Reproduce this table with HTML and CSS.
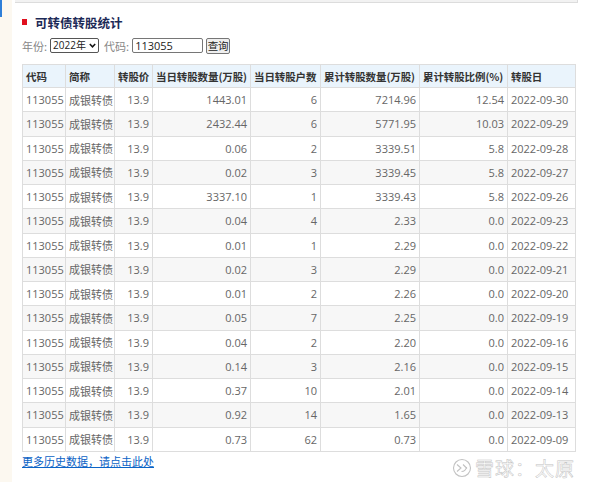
FILE: index.html
```html
<!DOCTYPE html>
<html lang="zh">
<head>
<meta charset="utf-8">
<title>可转债转股统计</title>
<link rel="stylesheet" href="styles.css">
</head>
<body>
<div class="page">
  <div class="side"><div class="side-bar"></div></div>
  <div class="main">
    <div class="top-rule"></div>
    <div class="content">
      <h2 class="title"><span class="title-mark"></span>可转债转股统计</h2>
      <form class="filter">
        <label class="lbl">年份:</label>
        <span class="sel-wrap">
          <select class="sel"><option>2022年</option></select>
          <svg class="sel-arrow" width="7" height="5" viewBox="0 0 7 5" fill="none" stroke="#111" stroke-width="1.5"><path d="M0.8 1 L3.5 3.8 L6.2 1"/></svg>
        </span>
        <label class="lbl">代码:</label>
        <input class="inp" type="text" value="113055">
        <button class="btn" type="button">查询</button>
      </form>
      <table class="grid">
        <colgroup>
          <col style="width:43px"><col style="width:49px"><col style="width:38px"><col style="width:98px">
          <col style="width:70px"><col style="width:99px"><col style="width:88px"><col style="width:68px">
        </colgroup>
        <thead>
          <tr><th>代码</th><th>简称</th><th>转股价</th><th>当日转股数量(万股)</th><th>当日转股户数</th><th>累计转股数量(万股)</th><th>累计转股比例(%)</th><th>转股日</th></tr>
        </thead>
        <tbody>
          <tr><td>113055</td><td>成银转债</td><td class="r">13.9</td><td class="r">1443.01</td><td class="r">6</td><td class="r">7214.96</td><td class="r">12.54</td><td>2022-09-30</td></tr>
          <tr><td>113055</td><td>成银转债</td><td class="r">13.9</td><td class="r">2432.44</td><td class="r">6</td><td class="r">5771.95</td><td class="r">10.03</td><td>2022-09-29</td></tr>
          <tr><td>113055</td><td>成银转债</td><td class="r">13.9</td><td class="r">0.06</td><td class="r">2</td><td class="r">3339.51</td><td class="r">5.8</td><td>2022-09-28</td></tr>
          <tr><td>113055</td><td>成银转债</td><td class="r">13.9</td><td class="r">0.02</td><td class="r">3</td><td class="r">3339.45</td><td class="r">5.8</td><td>2022-09-27</td></tr>
          <tr><td>113055</td><td>成银转债</td><td class="r">13.9</td><td class="r">3337.10</td><td class="r">1</td><td class="r">3339.43</td><td class="r">5.8</td><td>2022-09-26</td></tr>
          <tr><td>113055</td><td>成银转债</td><td class="r">13.9</td><td class="r">0.04</td><td class="r">4</td><td class="r">2.33</td><td class="r">0.0</td><td>2022-09-23</td></tr>
          <tr><td>113055</td><td>成银转债</td><td class="r">13.9</td><td class="r">0.01</td><td class="r">1</td><td class="r">2.29</td><td class="r">0.0</td><td>2022-09-22</td></tr>
          <tr><td>113055</td><td>成银转债</td><td class="r">13.9</td><td class="r">0.02</td><td class="r">3</td><td class="r">2.29</td><td class="r">0.0</td><td>2022-09-21</td></tr>
          <tr><td>113055</td><td>成银转债</td><td class="r">13.9</td><td class="r">0.01</td><td class="r">2</td><td class="r">2.26</td><td class="r">0.0</td><td>2022-09-20</td></tr>
          <tr><td>113055</td><td>成银转债</td><td class="r">13.9</td><td class="r">0.05</td><td class="r">7</td><td class="r">2.25</td><td class="r">0.0</td><td>2022-09-19</td></tr>
          <tr><td>113055</td><td>成银转债</td><td class="r">13.9</td><td class="r">0.04</td><td class="r">2</td><td class="r">2.20</td><td class="r">0.0</td><td>2022-09-16</td></tr>
          <tr><td>113055</td><td>成银转债</td><td class="r">13.9</td><td class="r">0.14</td><td class="r">3</td><td class="r">2.16</td><td class="r">0.0</td><td>2022-09-15</td></tr>
          <tr><td>113055</td><td>成银转债</td><td class="r">13.9</td><td class="r">0.37</td><td class="r">10</td><td class="r">2.01</td><td class="r">0.0</td><td>2022-09-14</td></tr>
          <tr><td>113055</td><td>成银转债</td><td class="r">13.9</td><td class="r">0.92</td><td class="r">14</td><td class="r">1.65</td><td class="r">0.0</td><td>2022-09-13</td></tr>
          <tr><td>113055</td><td>成银转债</td><td class="r">13.9</td><td class="r">0.73</td><td class="r">62</td><td class="r">0.73</td><td class="r">0.0</td><td>2022-09-09</td></tr>
        </tbody>
      </table>
      <a class="more" href="#">更多历史数据，请点击此处</a>
    </div>
  </div>
  <div class="watermark">
    <svg class="wm-icon" width="20" height="20" viewBox="0 0 20 20" fill="none" stroke="#c2c2c2" stroke-width="1.1">
      <circle cx="10" cy="10" r="8.5"/>
      <path d="M5 6.5 L9 10 L5 13.5 M9.5 13.5 C12 13.5 14 11.5 14.5 9 M11 6.5 L15 10.5"/>
    </svg>
    <span class="wm-text">雪球：太原</span>
  </div>
</div>
</body>
</html>
```

FILE: styles.css
```css
html, body {
  margin: 0;
  padding: 0;
  background: #ffffff;
}

body {
  font-family: "Open Sans", "Noto Sans CJK SC", sans-serif;
  font-size: 11px;
  color: #666666;
}

.page {
  position: relative;
  display: flex;
  min-height: 482px;
}

.side {
  width: 12px;
  flex: none;
  background: #fcf8f0;
}

.side-bar {
  width: 2px;
  height: 17px;
  background: #2f7fd8;
}

.main {
  margin-left: 3px;
  width: 563px;
}

.top-rule {
  height: 2px;
  background: #f2f2f2;
  border-bottom: 1px solid #dcdcdc;
  border-right: 1px solid #dcdcdc;
}

.content {
  padding-left: 7px;
}

.title {
  display: flex;
  align-items: center;
  margin: 9px 0 0 0;
  height: 20px;
  font-size: 12.5px;
  font-weight: bold;
  color: #1d2a57;
  font-family: "Noto Sans CJK SC", sans-serif;
}

.title-mark {
  width: 5px;
  height: 6px;
  background: #e0101e;
  margin-right: 8px;
}

.filter {
  display: flex;
  align-items: center;
  margin: 5px 0 0 0;
  height: 17px;
  gap: 3px;
}

.lbl {
  color: #888888;
  font-size: 11px;
  font-family: "Noto Sans CJK SC", sans-serif;
}

.sel-wrap {
  position: relative;
  display: inline-flex;
  margin-right: 2px;
}

.sel {
  -webkit-appearance: none;
  appearance: none;
  width: 49px;
  height: 15px;
  box-sizing: border-box;
  font-size: 10px;
  line-height: 13px;
  font-family: "Open Sans", "Noto Sans CJK SC", sans-serif;
  padding: 0 9px 0 2px;
  margin: 0;
  border: 1px solid #555;
  border-radius: 2px;
  color: #222;
  background: #fff;
}

.sel-arrow {
  position: absolute;
  right: 3px;
  top: 5px;
  pointer-events: none;
}

.inp {
  width: 71px;
  height: 15px;
  box-sizing: border-box;
  font-size: 11px;
  font-family: "Open Sans", sans-serif;
  padding: 0 2px;
  margin: 0;
  border: 1px solid #767676;
  border-radius: 2px;
  color: #222;
}

.btn {
  width: 24px;
  height: 16px;
  box-sizing: border-box;
  padding: 0;
  margin: 0;
  font-size: 10.5px;
  white-space: nowrap;
  font-family: "Noto Sans CJK SC", sans-serif;
  line-height: 14px;
  border: 1px solid #767676;
  border-radius: 2px;
  background: #efefef;
  color: #222;
}

.grid {
  margin-top: 10px;
  width: 553px;
  border-collapse: collapse;
  table-layout: fixed;
}

.grid th, .grid td {
  border: 1px solid #dddddd;
  padding: 0 3px;
  white-space: nowrap;
  overflow: hidden;
  text-align: left;
}

.grid th {
  height: 22px;
  padding: 0 2px 0 3px;
  background: #eaf4fc;
  color: #333333;
  font-size: 10.5px;
  font-weight: bold;
  font-family: "Noto Sans CJK SC", sans-serif;
  letter-spacing: -0.1px;
}

.grid td {
  height: 23.25px;
  color: #666666;
}

.grid tbody tr:nth-child(even) td {
  background: #f7f7f7;
}

.grid td.r {
  text-align: right;
}

.more {
  display: inline-block;
  margin-top: 1px;
  color: #0b63c6;
  text-decoration: underline;
  font-family: "Noto Sans CJK SC", sans-serif;
  font-size: 11px;
}

.watermark {
  position: absolute;
  right: 20px;
  top: 454px;
  display: flex;
  align-items: center;
  gap: 3px;
}

.wm-text {
  font-family: "Noto Sans CJK SC", sans-serif;
  font-size: 19px;
  color: rgba(255, 255, 255, 0.6);
  -webkit-text-stroke: 0.5px #c2c2c2;
  letter-spacing: 1px;
}
```
